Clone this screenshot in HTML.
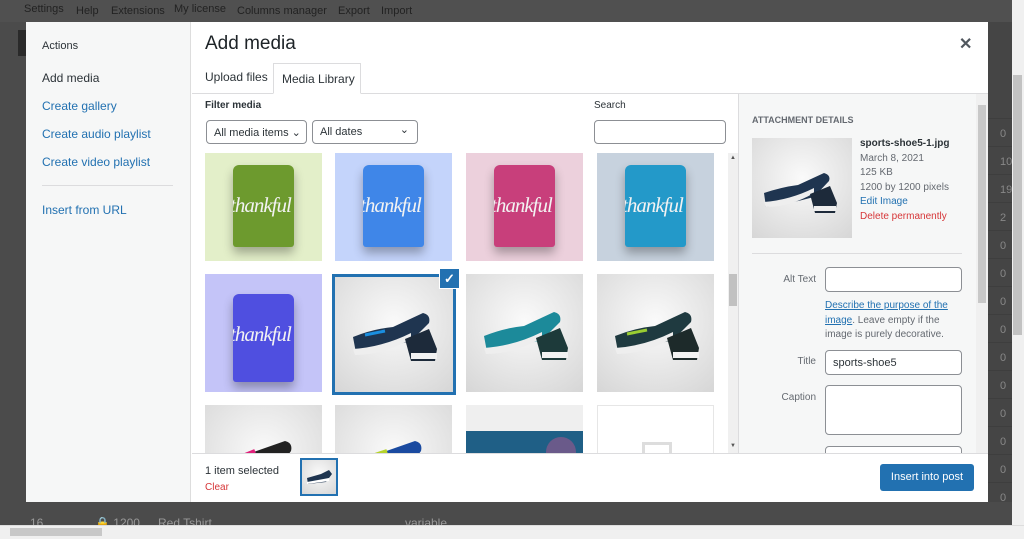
<!DOCTYPE html>
<html><head><meta charset="utf-8">
<style>
*{box-sizing:border-box;margin:0;padding:0}
body{width:1024px;height:539px;overflow:hidden;background:#4b4b4b;font-family:"Liberation Sans",sans-serif;position:relative}
.a{position:absolute}
.menu span{position:absolute;top:5px;font-size:11px;color:#222}
.rowl{position:absolute;left:988px;width:24px;height:1px;background:#3e3e3e}
.num{position:absolute;left:1000px;font-size:11px;color:#888}
.modal{left:26px;top:22px;width:962px;height:480px;background:#fff;overflow:hidden}
.side{left:0;top:0;width:165px;height:480px;background:#f6f7f7;border-right:1px solid #ddd}
.side div{position:absolute;left:16px;font-size:12px;color:#2271b1}
.tile{position:absolute;width:117px;height:118px;overflow:hidden}
.shirt{position:absolute;left:28px;top:22px;width:61px;height:82px;border-radius:6px 6px 3px 3px;box-shadow:0 6px 10px rgba(0,0,0,.3);overflow:hidden}
.shirt i{position:absolute;left:-3px;top:28px;font:italic 21px "Liberation Serif",serif;color:#f2f2f2;letter-spacing:-1px;white-space:nowrap}
.shoe{background:radial-gradient(circle at 50% 40%,#fafafa,#d6d6d6)}
input,.inp{position:absolute;border:1px solid #8c8f94;border-radius:4px;background:#fff;font-size:11px;color:#2c3338;padding-left:7px}
.lbl{position:absolute;font-size:10px;color:#646970;text-align:right;width:60px}
</style></head><body>
<div class="menu a" style="left:0;top:0;width:1024px;height:22px;background:#505050">
<span style="left:24px;top:3px">Settings</span><span style="left:76px">Help</span><span style="left:111px">Extensions</span><span style="left:174px;top:3px">My license</span><span style="left:237px">Columns manager</span><span style="left:338px">Export</span><span style="left:381px">Import</span></div>
<div class="a" style="left:18px;top:30px;width:8px;height:26px;background:#2a2a2a"></div>
<div class="a" style="left:988px;top:22px;width:24px;height:503px;background:#454545"></div>
<div class="rowl" style="top:118px"></div><div class="rowl" style="top:146px"></div><div class="rowl" style="top:174px"></div><div class="rowl" style="top:202px"></div><div class="rowl" style="top:230px"></div><div class="rowl" style="top:258px"></div><div class="rowl" style="top:286px"></div><div class="rowl" style="top:314px"></div><div class="rowl" style="top:342px"></div><div class="rowl" style="top:370px"></div><div class="rowl" style="top:398px"></div><div class="rowl" style="top:426px"></div><div class="rowl" style="top:454px"></div><div class="rowl" style="top:482px"></div>
<div class="num" style="top:128px">0</div><div class="num" style="top:156px">10</div><div class="num" style="top:184px">19</div><div class="num" style="top:212px">2</div><div class="num" style="top:240px">0</div><div class="num" style="top:268px">0</div><div class="num" style="top:296px">0</div><div class="num" style="top:324px">0</div><div class="num" style="top:352px">0</div><div class="num" style="top:380px">0</div><div class="num" style="top:408px">0</div><div class="num" style="top:436px">0</div><div class="num" style="top:464px">0</div><div class="num" style="top:492px">0</div>
<div class="a" style="left:1012px;top:0;width:12px;height:525px;background:#f0f0f0"></div>
<div class="a" style="left:1013px;top:75px;width:9px;height:260px;background:#c2c2c2"></div>
<div class="a" style="left:0;top:502px;width:1012px;height:23px;background:#4b4b4b"></div>
<div class="a" style="left:30px;top:516px;font-size:12px;color:#999">16</div>
<div class="a" style="left:95px;top:516px;font-size:12px;color:#999">&#128274; 1200</div>
<div class="a" style="left:158px;top:516px;font-size:12px;color:#999">Red Tshirt</div>
<div class="a" style="left:405px;top:516px;font-size:12px;color:#999">variable</div>
<div class="a" style="left:0;top:525px;width:1024px;height:14px;background:#f0f0f0;border-top:1px solid #ddd"></div>
<div class="a" style="left:10px;top:528px;width:92px;height:8px;background:#c8c8c8"></div>

<div class="modal a">
<div class="side a">
<div style="top:18px;color:#2c3338;font-size:11px">Actions</div>
<div style="top:49px;color:#2c3338">Add media</div>
<div style="top:77px">Create gallery</div>
<div style="top:105px">Create audio playlist</div>
<div style="top:133px">Create video playlist</div>
<div style="top:163px;width:131px;height:1px;background:#dcdcde"></div>
<div style="top:181px">Insert from URL</div>
</div>
<div class="a" style="left:179px;top:11px;font-size:19px;color:#1d2327">Add media</div>
<div class="a" style="left:933px;top:12px;font-size:16px;font-weight:bold;color:#50575e">✕</div>
<div class="a" style="left:166px;top:71px;width:796px;height:1px;background:#dcdcde"></div>
<div class="a" style="left:179px;top:48px;font-size:12px;color:#2c3338">Upload files</div>
<div class="a" style="left:247px;top:41px;width:88px;height:31px;border:1px solid #dcdcde;border-bottom:1px solid #fff;background:#fff;font-size:12px;color:#2c3338;padding:8px 0 0 8px">Media Library</div>
<div class="a" style="left:179px;top:78px;font-size:10px;font-weight:bold;color:#2c3338">Filter media</div>
<div class="inp" style="left:180px;top:98px;width:101px;height:24px;padding-top:5px">All media items ⌄</div>
<div class="inp" style="left:286px;top:98px;width:106px;height:24px;padding-top:5px">All dates<span style="position:absolute;right:8px;top:2px">⌄</span></div>
<div class="a" style="left:568px;top:78px;font-size:10px;color:#2c3338">Search</div>
<div class="inp" style="left:568px;top:98px;width:132px;height:24px"></div>

<div class="a" style="left:166px;top:131px;width:546px;height:300px;overflow:hidden">
 <div class="tile" style="left:13px;top:-10px;background:#e3efc9"><div class="shirt" style="background:#6d9a2e"><i>thankful</i></div></div>
 <div class="tile" style="left:143px;top:-10px;background:#c4d4fb"><div class="shirt" style="background:#3f86e8"><i>thankful</i></div></div>
 <div class="tile" style="left:274px;top:-10px;background:#ecd0dc"><div class="shirt" style="background:#c83f7b"><i>thankful</i></div></div>
 <div class="tile" style="left:405px;top:-10px;background:#c7d2de"><div class="shirt" style="background:#2399c9"><i>thankful</i></div></div>
 <div class="tile" style="left:13px;top:121px;background:#c4c4f8"><div class="shirt" style="background:#4f4fe0;top:20px;height:88px"><i>thankful</i></div></div>
 <div class="tile shoe" style="left:140px;top:121px;width:124px;height:121px;border:3px solid #2271b1">
  <svg width="118" height="115" style="position:absolute;left:0;top:0"><path d="M18 60 q20-8 40-10 l30-14 q8 2 6 10 l-18 18 q-30 8-55 12 z" fill="#1f3550"/><path d="M18 72 q30-2 58-16 l0 6 q-28 16-56 16z" fill="#eee"/><path d="M70 62 l24-10 8 20 -2 12 -24 0z" fill="#1d2a3a"/><path d="M76 76 l26 0 0 6 -26 0z" fill="#f2f2f2"/><path d="M30 58 l20-4" stroke="#1a8fe0" stroke-width="3"/></svg></div>
 <div class="a" style="left:247px;top:115px;width:21px;height:21px;background:#2271b1;border:1px solid #fff;color:#fff;font-size:13px;text-align:center;line-height:19px;font-weight:bold">✓</div>
 <div class="tile shoe" style="left:274px;top:121px"><svg width="117" height="118"><path d="M18 62 q20-8 40-10 l30-14 q8 2 6 10 l-18 18 q-30 8-55 12 z" fill="#1c8a9a"/><path d="M18 74 q30-2 58-16 l0 6 q-28 16-56 16z" fill="#eee"/><path d="M70 64 l24-10 8 20 -2 12 -24 0z" fill="#1d3a3a"/><path d="M76 78 l26 0 0 6 -26 0z" fill="#f2f2f2"/></svg></div>
 <div class="tile shoe" style="left:405px;top:121px"><svg width="117" height="118"><path d="M18 62 q20-8 40-10 l30-14 q8 2 6 10 l-18 18 q-30 8-55 12 z" fill="#1f3a40"/><path d="M18 74 q30-2 58-16 l0 6 q-28 16-56 16z" fill="#eee"/><path d="M70 64 l24-10 8 20 -2 12 -24 0z" fill="#1d2a2a"/><path d="M30 60 l20-4" stroke="#9acd32" stroke-width="3"/><path d="M76 78 l26 0 0 6 -26 0z" fill="#f2f2f2"/></svg></div>
 <div class="tile shoe" style="left:13px;top:252px"><svg width="117" height="60"><path d="M40 50 l40-14 q8 2 6 10 l-10 14 -40 0z" fill="#222"/><path d="M40 50 l10-4" stroke="#e0207a" stroke-width="4"/></svg></div>
 <div class="tile shoe" style="left:143px;top:252px"><svg width="117" height="60"><path d="M40 50 l40-14 q8 2 6 10 l-10 14 -40 0z" fill="#1a4aa0"/><path d="M40 50 l12-4" stroke="#b5d22a" stroke-width="4"/></svg></div>
 <div class="tile" style="left:274px;top:252px;background:#efefef"><div class="a" style="left:0;top:26px;width:117px;height:40px;background:#1f5f86"></div><div class="a" style="left:80px;top:32px;width:30px;height:30px;border-radius:50%;background:#6a5a8a"></div></div>
 <div class="tile" style="left:405px;top:252px;background:#fff;border:1px solid #e6e6e6"><div class="a" style="left:44px;top:36px;width:30px;height:20px;border:3px solid #ddd"></div></div>
</div>
<div class="a" style="left:702px;top:131px;width:10px;height:300px;background:#f0f0f0"></div>
<div class="a" style="left:703px;top:252px;width:8px;height:32px;background:#c1c1c1"></div>
<div class="a" style="left:704px;top:133px;font-size:6px;color:#555">▲</div>
<div class="a" style="left:704px;top:421px;font-size:6px;color:#555">▼</div>

<div class="a" style="left:712px;top:72px;width:250px;height:359px;background:#f6f7f7;border-left:1px solid #dcdcde"></div>
<div class="a" style="left:950px;top:72px;width:12px;height:359px;background:#f0f0f0"></div>
<div class="a" style="left:952px;top:83px;width:8px;height:198px;background:#c8c8c8"></div>
<div class="a" style="left:726px;top:93px;font-size:9px;font-weight:bold;color:#646970">ATTACHMENT DETAILS</div>
<div class="a shoe" style="left:726px;top:116px;width:100px;height:100px"><svg width="100" height="100"><path d="M12 55 q18-6 34-8 l26-12 q7 2 5 8 l-15 16 q-26 7-48 10z" fill="#1f3550"/><path d="M12 64 q26-2 50-14 l0 5 q-24 14-48 14z" fill="#eee"/><path d="M58 56 l20-8 7 17 -2 10 -20 0z" fill="#1d2a3a"/><path d="M62 68 l22 0 0 5 -22 0z" fill="#eee"/></svg></div>
<div class="a" style="left:834px;top:115px;font-size:10px;line-height:14.6px;color:#646970"><b style="color:#2c3338">sports-shoe5-1.jpg</b><br>March 8, 2021<br>125 KB<br>1200 by 1200 pixels<br><span style="color:#2271b1">Edit Image</span><br><span style="color:#d63638">Delete permanently</span></div>
<div class="a" style="left:726px;top:231px;width:210px;height:1px;background:#dcdcde"></div>
<div class="lbl" style="left:730px;top:252px">Alt Text</div>
<div class="inp" style="left:799px;top:245px;width:137px;height:25px"></div>
<div class="a" style="left:799px;top:277px;font-size:10px;line-height:14.6px;color:#646970;width:140px"><span style="color:#2271b1;text-decoration:underline">Describe the purpose of the image</span>. Leave empty if the image is purely decorative.</div>
<div class="lbl" style="left:730px;top:334px">Title</div>
<div class="inp" style="left:799px;top:328px;width:137px;height:25px;padding-top:6px">sports-shoe5</div>
<div class="lbl" style="left:730px;top:370px">Caption</div>
<div class="inp" style="left:799px;top:363px;width:137px;height:50px"></div>
<div class="inp" style="left:799px;top:424px;width:137px;height:20px"></div>

<div class="a" style="left:166px;top:431px;width:796px;height:49px;background:#fff;border-top:1px solid #dcdcde"></div>
<div class="a" style="left:179px;top:443px;font-size:11px;color:#2c3338">1 item selected</div>
<div class="a" style="left:179px;top:460px;font-size:10px;color:#d63638">Clear</div>
<div class="a shoe" style="left:274px;top:436px;width:38px;height:38px;border:2px solid #2271b1"><svg width="34" height="34"><path d="M5 18 l14-4 8-4 3 4 -6 8 -18 2z" fill="#1f3550"/><path d="M5 22 l22-4 0 3 -22 3z" fill="#fff"/></svg></div>
<div class="a" style="left:854px;top:442px;width:94px;height:27px;background:#2271b1;border-radius:3px;color:#fff;font-size:11px;text-align:center;line-height:27px">Insert into post</div>
</div>
</body></html>
